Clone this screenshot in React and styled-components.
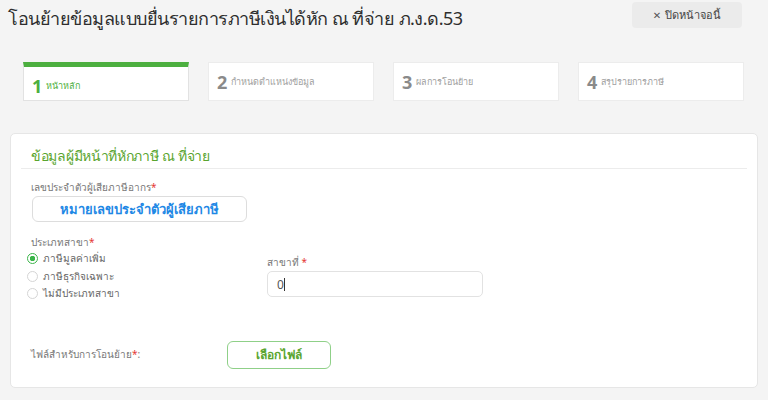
import React from 'react';
import styled, { createGlobalStyle } from 'styled-components';

const steps = [
  { n: 1, label: 'หน้าหลัก' },
  { n: 2, label: 'กำหนดตำแหน่งข้อมูล' },
  { n: 3, label: 'ผลการโอนย้าย' },
  { n: 4, label: 'สรุปรายการภาษี' },
];

const branchTypes = ['ภาษีมูลค่าเพิ่ม', 'ภาษีธุรกิจเฉพาะ', 'ไม่มีประเภทสาขา'];

export default function App() {
  return (
    <>
      <GlobalStyle />
      <Page>
        <Header>
          <Title>โอนย้ายข้อมูลแบบยื่นรายการภาษีเงินได้หัก ณ ที่จ่าย ภ.ง.ด.53</Title>
          <CloseButton>
            <CloseMark>✕</CloseMark> ปิดหน้าจอนี้
          </CloseButton>
        </Header>

        <Steps>
          {steps.map((s, i) => (
            <Step key={s.n} active={i === 0}>
              <StepNum active={i === 0}>{s.n}</StepNum>
              <StepLabel active={i === 0}>{s.label}</StepLabel>
            </Step>
          ))}
        </Steps>

        <Card>
          <SectionTitle>ข้อมูลผู้มีหน้าที่หักภาษี ณ ที่จ่าย</SectionTitle>
          <Body>
            <Label>เลขประจำตัวผู้เสียภาษีอากร<Req>*</Req></Label>
            <TaxIdButton>หมายเลขประจำตัวผู้เสียภาษี</TaxIdButton>

            <BranchRow>
              <div>
                <Label>ประเภทสาขา<Req>*</Req></Label>
                <RadioList>
                  {branchTypes.map((t, i) => (
                    <RadioItem key={t}>
                      <Radio checked={i === 0} />
                      {t}
                    </RadioItem>
                  ))}
                </RadioList>
              </div>
              <BranchField>
                <Label>สาขาที่ <Req>*</Req></Label>
                <Input>0<Caret /></Input>
              </BranchField>
            </BranchRow>

            <FileRow>
              <FileLabel>ไฟล์สำหรับการโอนย้าย<Req>*</Req>:</FileLabel>
              <FileButton>เลือกไฟล์</FileButton>
            </FileRow>
          </Body>
        </Card>
      </Page>
    </>
  );
}

const GlobalStyle = createGlobalStyle`
  body {
    margin: 0;
    background: #f4f4f4;
    font-family: "Noto Sans", "DejaVu Sans", sans-serif;
  }
`;

const Page = styled.div`
  width: 768px;
  height: 400px;
  overflow: hidden;
`;

const Header = styled.div`
  display: flex;
  justify-content: space-between;
  align-items: flex-start;
  padding: 2px 26px 0 8px;
`;

const Title = styled.h1`
  margin: 3px 0 0;
  font-size: 18px;
  font-weight: 400;
  letter-spacing: -0.5px;
  color: #2e2e2e;
  line-height: 26px;
`;

const CloseButton = styled.div`
  width: 110px;
  height: 26px;
  box-sizing: border-box;
  background: #ebebeb;
  border-radius: 4px;
  display: flex;
  align-items: center;
  justify-content: center;
  gap: 4px;
  font-size: 11px;
  color: #444;
`;

const CloseMark = styled.span`
  font-size: 10px;
  font-weight: 700;
  color: #555;
`;

const Steps = styled.div`
  display: grid;
  grid-template-columns: repeat(4, 166px);
  column-gap: 19px;
  padding: 31px 0 0 23px;
`;

const Step = styled.div`
  height: 39px;
  box-sizing: border-box;
  background: #fff;
  border: 1px solid ${p => (p.active ? '#e2e2e2' : '#ececec')};
  border-top: ${p => (p.active ? '5px solid #4caf3f' : '1px solid #ececec')};
  display: flex;
  align-items: center;
  padding: ${p => (p.active ? '4px 0 0 8px' : '0 0 0 8px')};
  gap: 4px;
`;

const StepNum = styled.span`
  font-size: 18px;
  font-weight: 700;
  color: ${p => (p.active ? '#4caf3f' : '#8a8a8a')};
`;

const StepLabel = styled.span`
  font-size: 9px;
  color: ${p => (p.active ? '#4caf3f' : '#a0a0a0')};
`;

const Card = styled.div`
  margin: 32px 10px 0 10px;
  height: 255px;
  box-sizing: border-box;
  background: #fff;
  border: 1px solid #e6e6e6;
  border-radius: 5px;
  padding: 12px 10px 0 10px;
`;

const SectionTitle = styled.h2`
  margin: 0;
  padding: 0 0 2px 10px;
  font-size: 14px;
  line-height: 20px;
  font-weight: 400;
  letter-spacing: -0.3px;
  color: #5aa52f;
  border-bottom: 1px solid #ececec;
`;

const Body = styled.div`
  padding: 11px 0 0 10px;
`;

const Label = styled.div`
  font-size: 10px;
  color: #777;
  line-height: 14px;
`;

const Req = styled.span`
  color: #e53935;
`;

const TaxIdButton = styled.div`
  margin: 2px 0 0 1px;
  width: 215px;
  height: 26px;
  box-sizing: border-box;
  border: 1px solid #ddd;
  border-radius: 6px;
  display: flex;
  align-items: center;
  justify-content: center;
  font-size: 13px;
  font-weight: 700;
  color: #1e88e5;
`;

const BranchRow = styled.div`
  display: grid;
  grid-template-columns: 236px 216px;
  margin-top: 13px;
`;

const RadioList = styled.div`
  display: flex;
  flex-direction: column;
  margin: 1px 0 0 -4px;
`;

const RadioItem = styled.label`
  display: flex;
  align-items: center;
  gap: 5px;
  height: 17.5px;
  font-size: 10px;
  color: #666;
`;

const Radio = styled.span`
  width: 11px;
  height: 11px;
  box-sizing: border-box;
  border-radius: 50%;
  border: 1px solid ${p => (p.checked ? '#3bb54a' : '#d5d5d5')};
  background: ${p => (p.checked ? 'radial-gradient(circle, #3bb54a 0 2.5px, #fff 3px)' : '#fff')};
`;

const BranchField = styled.div`
  padding-top: 20px;
`;

const Input = styled.div`
  margin-top: 2px;
  height: 26px;
  box-sizing: border-box;
  border: 1px solid #e2e2e2;
  border-radius: 5px;
  display: flex;
  align-items: center;
  padding-left: 9px;
  font-size: 12px;
  color: #555;
`;

const Caret = styled.span`
  width: 1px;
  height: 13px;
  background: #333;
`;

const FileRow = styled.div`
  display: flex;
  align-items: center;
  margin-top: 38px;
`;

const FileLabel = styled.div`
  width: 196px;
  font-size: 10px;
  color: #777;
`;

const FileButton = styled.div`
  width: 104px;
  height: 28px;
  box-sizing: border-box;
  border: 1px solid #8fd088;
  border-radius: 6px;
  display: flex;
  align-items: center;
  justify-content: center;
  font-size: 12px;
  font-weight: 700;
  color: #5aa52f;
`;
